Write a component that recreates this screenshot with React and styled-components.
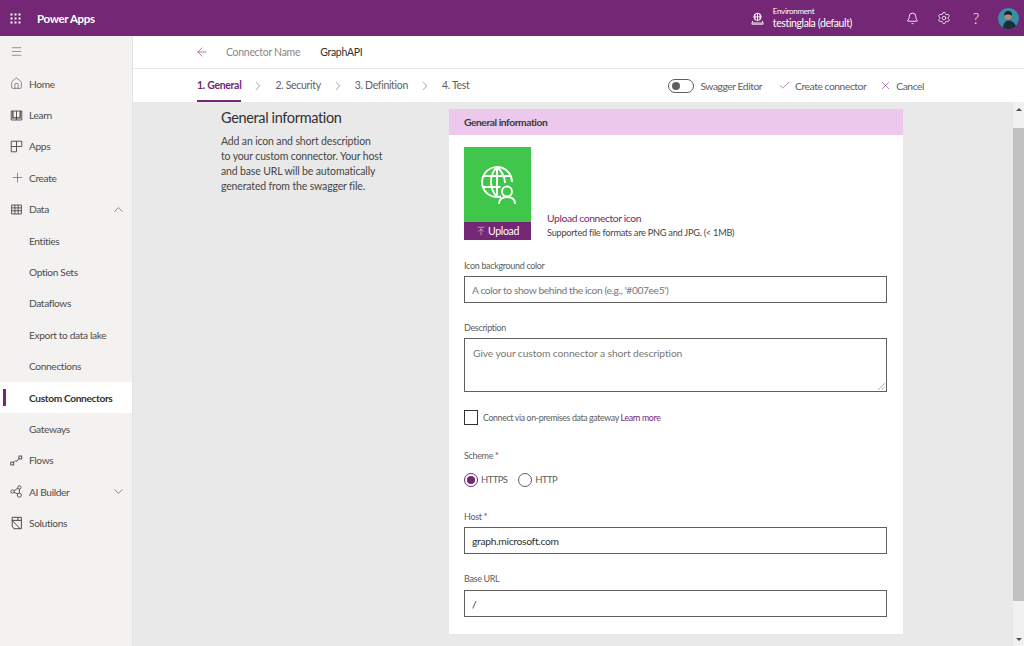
import React from "react";
import styled, { createGlobalStyle } from "styled-components";
import {
  ArrowLeft,
  ArrowUpToLine,
  Bell,
  Check,
  ChevronDown,
  ChevronRight,
  ChevronUp,
  Home,
  Menu,
  Plus,
  Settings,
  X,
} from "lucide-react";

const GlobalStyle = createGlobalStyle`
  html, body {
    margin: 0;
    height: 100%;
    overflow: hidden;
  }
  body {
    font-family: "Lato", "Open Sans", sans-serif;
    color: #323130;
  }
  * {
    box-sizing: border-box;
  }
`;

const Page = styled.div`
  width: 1024px;
  height: 646px;
  display: flex;
  flex-direction: column;
  overflow: hidden;
`;

const Header = styled.header`
  height: 36px;
  flex: none;
  background: #742774;
  color: #fff;
  display: flex;
  align-items: center;
  padding: 0 5px 0 10px;
`;

const AppName = styled.div`
  margin-left: 16px;
  font-size: 11.5px;
  font-weight: 700;
  letter-spacing: -0.35px;
  flex: 1;
`;

const EnvBlock = styled.div`
  display: flex;
  align-items: center;
  gap: 9px;
  margin-right: 44px;
`;

const EnvText = styled.div`
  display: flex;
  flex-direction: column;
`;

const EnvLabel = styled.span`
  font-size: 8px;
  line-height: 10px;
  letter-spacing: -0.3px;
`;

const EnvName = styled.span`
  font-size: 10.5px;
  line-height: 14px;
  letter-spacing: -0.38px;
`;

const HeaderIcon = styled.div`
  width: 32px;
  display: flex;
  justify-content: center;
  align-items: center;
  font-size: 15px;
  font-weight: 300;
`;

const Avatar = styled.svg`
  width: 21px;
  height: 21px;
  margin-left: 6px;
  display: block;
`;

const Body = styled.div`
  flex: 1;
  display: flex;
  min-height: 0;
`;

const Sidebar = styled.nav`
  width: 133px;
  flex: none;
  background: #f3f2f1;
  border-right: 1px solid #e4e3e2;
  color: #484644;
`;

const MenuRow = styled.div`
  height: 32px;
  display: flex;
  align-items: center;
  padding: 0 0 2px 10px;
`;

const NavItem = styled.div`
  height: 31.4px;
  display: flex;
  align-items: center;
  padding-left: ${(p) => (p.$sub ? "29px" : "10px")};
  padding-right: 6px;
  font-size: 10.2px;
  letter-spacing: -0.37px;
  position: relative;
  background: ${(p) => (p.$active ? "#fff" : "transparent")};
  font-weight: ${(p) => (p.$active ? 700 : 400)};
  color: ${(p) => (p.$active ? "#323130" : "#4f4d4b")};

  ${(p) =>
    p.$active &&
    `
    &::before {
      content: "";
      position: absolute;
      left: 3px;
      top: 7px;
      bottom: 7px;
      width: 2.5px;
      background: #742774;
    }
  `}
`;

const NavIcon = styled.span`
  width: 19px;
  display: flex;
  align-items: center;
`;

const NavLabel = styled.span`
  flex: 1;
`;

const Main = styled.main`
  flex: 1;
  min-width: 0;
  display: flex;
  flex-direction: column;
`;

const TitleBar = styled.div`
  height: 33px;
  flex: none;
  background: #fff;
  border-bottom: 1px solid #e8e8e8;
  display: flex;
  align-items: center;
  padding-left: 62px;
  font-size: 10.5px;
  letter-spacing: -0.3px;
`;

const ConnectorLabel = styled.span`
  margin-left: 17px;
  color: #8a8886;
`;

const ConnectorValue = styled.span`
  margin-left: 20px;
  color: #323130;
`;

const TabBar = styled.div`
  height: 33px;
  flex: none;
  background: #fff;
  display: flex;
  align-items: stretch;
  padding: 0 100px 0 64px;
`;

const Tab = styled.div`
  display: flex;
  align-items: center;
  font-size: 10.5px;
  letter-spacing: -0.32px;
  color: ${(p) => (p.$active ? "#742774" : "#605e5c")};
  font-weight: ${(p) => (p.$active ? 700 : 400)};
  border-bottom: 2px solid ${(p) => (p.$active ? "#742774" : "transparent")};
`;

const TabSep = styled.div`
  width: 34px;
  display: flex;
  align-items: center;
  justify-content: center;
  color: #605e5c;
`;

const Actions = styled.div`
  margin-left: auto;
  display: flex;
  align-items: center;
  font-size: 10.3px;
  letter-spacing: -0.45px;
  color: #605e5c;
`;

const Toggle = styled.div`
  width: 26px;
  height: 14px;
  border: 1px solid #605e5c;
  border-radius: 7px;
  padding: 2px 3px;
  margin-right: 6px;

  &::before {
    content: "";
    display: block;
    width: 8px;
    height: 8px;
    border-radius: 50%;
    background: #605e5c;
  }
`;

const Action = styled.div`
  display: flex;
  align-items: center;
  gap: 4px;
  margin-right: ${(p) => p.$gap || 0}px;
`;

const ContentRow = styled.div`
  flex: 1;
  min-height: 0;
  display: flex;
  background: #e9e9e9;
`;

const Scroller = styled.div`
  flex: 1;
  min-width: 0;
  display: flex;
  padding: 7px 0 0 88px;
`;

const Intro = styled.aside`
  width: 228px;
  flex: none;
`;

const IntroTitle = styled.h2`
  margin: 0 0 7px;
  font-size: 14.5px;
  line-height: 18px;
  font-weight: 400;
  letter-spacing: -0.35px;
  color: #323130;
`;

const IntroText = styled.p`
  margin: 0;
  font-size: 10.5px;
  line-height: 15px;
  letter-spacing: -0.15px;
  color: #484644;
`;

const Panel = styled.section`
  width: 454px;
  height: 525px;
  flex: none;
  background: #fff;
`;

const PanelHeader = styled.div`
  height: 26px;
  background: #ecc9ec;
  display: flex;
  align-items: center;
  padding: 0 0 1px 15px;
  font-size: 10.3px;
  font-weight: 700;
  letter-spacing: -0.45px;
  color: #3b3a39;
`;

const PanelBody = styled.div`
  padding: 12px 16px 0 15px;
`;

const UploadRow = styled.div`
  display: flex;
  align-items: flex-end;
  gap: 16px;
`;

const IconTile = styled.div`
  width: 67px;
  height: 93px;
  background: #3fc64b;
  display: flex;
  flex-direction: column;
`;

const TileArt = styled.div`
  flex: 1;
  display: flex;
  align-items: center;
  justify-content: center;
  padding-left: 3px;
`;

const UploadBar = styled.div`
  height: 18px;
  background: #742774;
  color: #fff;
  display: flex;
  align-items: center;
  justify-content: center;
  gap: 2px;
  font-size: 10.5px;
  letter-spacing: -0.3px;
`;

const UploadText = styled.div`
  display: flex;
  flex-direction: column;
`;

const UploadLink = styled.span`
  font-size: 10.3px;
  line-height: 16px;
  letter-spacing: -0.38px;
  color: #742774;
`;

const Hint = styled.span`
  font-size: 9.2px;
  line-height: 14px;
  letter-spacing: -0.25px;
  color: #484644;
`;

const Label = styled.div`
  font-size: 9px;
  line-height: 14px;
  letter-spacing: -0.33px;
  color: #605e5c;
  margin-top: ${(p) => p.$top}px;
  margin-bottom: ${(p) => p.$bottom ?? 3}px;
`;

const Required = styled.span`
  color: #a4262c;
`;

const Input = styled.div`
  height: ${(p) => p.$height || 27}px;
  border: 1px solid #605e5c;
  padding: ${(p) => (p.$multi ? "7px 8px" : "0 7px")};
  display: flex;
  align-items: ${(p) => (p.$multi ? "flex-start" : "center")};
  font-size: 10.3px;
  line-height: 14px;
  letter-spacing: ${(p) => (p.$multi ? "-0.1px" : p.$filled ? "-0.3px" : "-0.41px")};
  color: ${(p) => (p.$filled ? "#323130" : "#797775")};
  position: relative;
`;

const ResizeGrip = styled.svg`
  position: absolute;
  right: 1px;
  bottom: 1px;
  width: 7px;
  height: 7px;
`;

const CheckRow = styled.div`
  margin-top: 18px;
  display: flex;
  align-items: center;
  gap: 5px;
  font-size: 8.8px;
  letter-spacing: -0.36px;
  color: #605e5c;
`;

const CheckBox = styled.div`
  width: 14px;
  height: 15px;
  border: 1px solid #323130;
`;

const LearnMore = styled.span`
  color: #742774;
`;

const RadioRow = styled.div`
  display: flex;
  align-items: center;
  height: 15px;
  font-size: 9.5px;
  letter-spacing: -0.6px;
  color: #605e5c;
`;

const Radio = styled.div`
  width: 14px;
  height: 14px;
  border-radius: 50%;
  border: 1px solid ${(p) => (p.$on ? "#742774" : "#605e5c")};
  display: flex;
  align-items: center;
  justify-content: center;
  margin-right: 3px;

  &::before {
    content: "";
    width: 8px;
    height: 8px;
    border-radius: 50%;
    background: ${(p) => (p.$on ? "#742774" : "transparent")};
  }
`;

const RadioLabel = styled.span`
  margin-right: ${(p) => p.$gap || 0}px;
`;

const ScrollTrack = styled.div`
  width: 11px;
  flex: none;
  background: #f1f1f1;
  display: flex;
  flex-direction: column;
  align-items: stretch;
`;

const ScrollArrow = styled.div`
  height: 14px;
  flex: none;
  display: flex;
  align-items: center;
  justify-content: center;

  &::before {
    content: "";
    border-left: 3px solid transparent;
    border-right: 3px solid transparent;
    ${(p) => (p.$down ? "border-top" : "border-bottom")}: 3px solid #505050;
  }
`;

const ScrollThumb = styled.div`
  height: 473px;
  flex: none;
  margin-top: 12px;
  margin-bottom: auto;
  background: #c1c1c1;
`;

const Line = ({ size = 16, children, color = "#484644" }) => (
  <svg
    width={size}
    height={size}
    viewBox="0 0 16 16"
    fill="none"
    stroke={color}
    strokeWidth="1.1"
    style={{ display: "block" }}
  >
    {children}
  </svg>
);

const WaffleIcon = () => (
  <svg width="11" height="11" viewBox="0 0 11 11" fill="#fff" style={{ display: "block" }}>
    {[0.5, 4.5, 8.5].map((y) =>
      [0.5, 4.5, 8.5].map((x) => <rect key={`${x}-${y}`} x={x} y={y} width="2" height="2" />)
    )}
  </svg>
);

const EnvIcon = () => (
  <Line size={13} color="#fff">
    <circle cx="8" cy="6" r="4.5" />
    <path d="M3.5 6h9M8 1.5v9M5.5 2.5c-1 2.5-1 4.5 0 7M10.5 2.5c1 2.5 1 4.5 0 7" />
    <path d="M2 13.5h12M2 11l-1 4h14l-1-4" />
  </Line>
);

const LearnIcon = () => (
  <Line size={13}>
    <path d="M1.5 2.5h13v11h-13zM8 2.5v11" />
    <path d="M3.5 2.5V11H8M12.5 2.5V11H8" strokeWidth="1.6" />
  </Line>
);

const AppsIcon = () => (
  <Line size={13}>
    <path d="M1.5 1.5h13V8H8v6.5H1.5zM1.5 8H8M8 1.5V8" />
  </Line>
);

const DataIcon = () => (
  <Line size={13}>
    <path d="M2 2.5h12v11H2zM2 6h12M2 9.5h12M6 2.5v11M10 2.5v11" />
  </Line>
);

const FlowsIcon = () => (
  <Line size={13}>
    <rect x="1" y="10" width="3.5" height="3.5" />
    <rect x="11" y="2.5" width="3.5" height="3.5" />
    <path d="M4.5 10.5L7 8l1.5 1L11 5.5" />
  </Line>
);

const BuilderIcon = () => (
  <Line size={13}>
    <circle cx="3" cy="8" r="2" />
    <circle cx="11.5" cy="3" r="2" />
    <circle cx="11.5" cy="12.5" r="2.5" />
    <path d="M5 7l4.8-3M5 9l4.5 2M11.5 5v5" />
  </Line>
);

const SolutionsIcon = () => (
  <Line size={14}>
    <path d="M2.5 1.5H13v13H4.5l-2-3zM2.5 5H13M2.5 5l9 9.5M9 1.5V5" />
  </Line>
);

const ConnectorArt = () => (
  <svg width="36" height="40" viewBox="0 0 36 40" fill="none" stroke="#fff" strokeWidth="1.9">
    <path d="M20 31.5A15 15 0 1 1 31 17" />
    <path d="M2.5 11h27M2.5 22h17M16 2c-8 8-8 21 0 30M16 2c5 4.5 8 10 8 16M16 2v30" />
    <circle cx="26" cy="26.5" r="5" fill="#3fc64b" />
    <path d="M18 39c0-5 3.5-7 8-7s8 2 8 7" />
  </svg>
);

const navItems = [
  { label: "Home", icon: <Home size={13} strokeWidth={1.1} /> },
  { label: "Learn", icon: <LearnIcon /> },
  { label: "Apps", icon: <AppsIcon /> },
  { label: "Create", icon: <Plus size={15} strokeWidth={1} /> },
  { label: "Data", icon: <DataIcon />, chevron: "up" },
  { label: "Entities", sub: true },
  { label: "Option Sets", sub: true },
  { label: "Dataflows", sub: true },
  { label: "Export to data lake", sub: true },
  { label: "Connections", sub: true },
  { label: "Custom Connectors", sub: true, active: true },
  { label: "Gateways", sub: true },
  { label: "Flows", icon: <FlowsIcon /> },
  { label: "AI Builder", icon: <BuilderIcon />, chevron: "down" },
  { label: "Solutions", icon: <SolutionsIcon /> },
];

const steps = ["1. General", "2. Security", "3. Definition", "4. Test"];

const App = () => (
  <Page>
    <GlobalStyle />
    <Header>
      <WaffleIcon />
      <AppName>Power Apps</AppName>
      <EnvBlock>
        <EnvIcon />
        <EnvText>
          <EnvLabel>Environment</EnvLabel>
          <EnvName>testinglala (default)</EnvName>
        </EnvText>
      </EnvBlock>
      <HeaderIcon>
        <Bell size={13} strokeWidth={1.6} />
      </HeaderIcon>
      <HeaderIcon>
        <Settings size={14} strokeWidth={1.3} />
      </HeaderIcon>
      <HeaderIcon>?</HeaderIcon>
      <Avatar viewBox="0 0 21 21">
        <circle cx="10.5" cy="10.5" r="10.5" fill="#3a8fa8" />
        <path d="M5 19.5c.5-5 3-7 5.5-7 3.5 0 6 2 7.5 5.5a10.5 10.5 0 0 1-13 1.5z" fill="#1c2f38" />
        <circle cx="10" cy="8" r="3.5" fill="#b98a70" />
        <path d="M6 7.5C6 4.3 8 3 10 3s4.5 1.3 4 4.5c-2-1.5-6-1.5-8 0z" fill="#15202a" />
      </Avatar>
    </Header>
    <Body>
      <Sidebar>
        <MenuRow>
          <Menu size={13} strokeWidth={1} color="#484644" />
        </MenuRow>
        {navItems.map((item) => (
          <NavItem key={item.label} $sub={item.sub} $active={item.active}>
            {item.icon && <NavIcon>{item.icon}</NavIcon>}
            <NavLabel>{item.label}</NavLabel>
            {item.chevron === "up" && <ChevronUp size={15} strokeWidth={1} />}
            {item.chevron === "down" && <ChevronDown size={15} strokeWidth={1} />}
          </NavItem>
        ))}
      </Sidebar>
      <Main>
        <TitleBar>
          <ArrowLeft size={14} strokeWidth={1} color="#742774" />
          <ConnectorLabel>Connector Name</ConnectorLabel>
          <ConnectorValue>GraphAPI</ConnectorValue>
        </TitleBar>
        <TabBar>
          {steps.map((step, index) => (
            <React.Fragment key={step}>
              {index > 0 && (
                <TabSep>
                  <ChevronRight size={14} strokeWidth={1} />
                </TabSep>
              )}
              <Tab $active={index === 0}>{step}</Tab>
            </React.Fragment>
          ))}
          <Actions>
            <Toggle />
            <Action $gap={16}>Swagger Editor</Action>
            <Action $gap={13}>
              <Check size={13} strokeWidth={1} color="#742774" />
              Create connector
            </Action>
            <Action>
              <X size={13} strokeWidth={1} color="#742774" />
              Cancel
            </Action>
          </Actions>
        </TabBar>
        <ContentRow>
          <Scroller>
            <Intro>
              <IntroTitle>General information</IntroTitle>
              <IntroText>
                Add an icon and short description
                <br />
                to your custom connector. Your host
                <br />
                and base URL will be automatically
                <br />
                generated from the swagger file.
              </IntroText>
            </Intro>
            <Panel>
              <PanelHeader>General information</PanelHeader>
              <PanelBody>
                <UploadRow>
                  <IconTile>
                    <TileArt>
                      <ConnectorArt />
                    </TileArt>
                    <UploadBar>
                      <ArrowUpToLine size={10} strokeWidth={1.2} />
                      Upload
                    </UploadBar>
                  </IconTile>
                  <UploadText>
                    <UploadLink>Upload connector icon</UploadLink>
                    <Hint>Supported file formats are PNG and JPG. (&lt; 1MB)</Hint>
                  </UploadText>
                </UploadRow>
                <Label $top={19}>Icon background color</Label>
                <Input>A color to show behind the icon (e.g., '#007ee5')</Input>
                <Label $top={18}>Description</Label>
                <Input $multi $height={54}>
                  Give your custom connector a short description
                  <ResizeGrip viewBox="0 0 7 7" stroke="#a19f9d" strokeWidth="0.8">
                    <path d="M0 7L7 0M3.5 7L7 3.5" />
                  </ResizeGrip>
                </Input>
                <CheckRow>
                  <CheckBox />
                  <span>
                    Connect via on-premises data gateway <LearnMore>Learn more</LearnMore>
                  </span>
                </CheckRow>
                <Label $top={24} $bottom={9}>
                  Scheme <Required>*</Required>
                </Label>
                <RadioRow>
                  <Radio $on />
                  <RadioLabel $gap={11}>HTTPS</RadioLabel>
                  <Radio />
                  <RadioLabel>HTTP</RadioLabel>
                </RadioRow>
                <Label $top={23}>
                  Host <Required>*</Required>
                </Label>
                <Input $filled>graph.microsoft.com</Input>
                <Label $top={18} $bottom={4}>
                  Base URL
                </Label>
                <Input $filled>/</Input>
              </PanelBody>
            </Panel>
          </Scroller>
          <ScrollTrack>
            <ScrollArrow />
            <ScrollThumb />
            <ScrollArrow $down />
          </ScrollTrack>
        </ContentRow>
      </Main>
    </Body>
  </Page>
);

export default App;
